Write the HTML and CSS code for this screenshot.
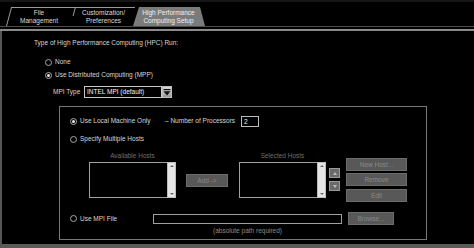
FILE: index.html
```html
<!DOCTYPE html>
<html lang="en">
<head>
  <meta charset="UTF-8" />
  <title>HPC Setup</title>
  <link rel="stylesheet" href="styles.css">
</head>
<body>
  <div class="top-strip"></div>

  <div class="tabs">
    <div class="tab tab-first">File<br>Management</div>
    <div class="tab tab-second">Customization/<br>Preferences</div>
    <div class="tab tab-active">High Performance<br>Computing Setup</div>
  </div>
  <div class="rule"></div>

  <div class="panel">
    <div class="heading">Type of High Performance Computing (HPC) Run:</div>

    <label class="radio-row run-none"><span class="radio"></span>None</label>
    <label class="radio-row run-mpp"><span class="radio on"></span>Use Distributed Computing (MPP)</label>

    <div class="mpi-type">
      <span class="mpi-label">MPI Type</span>
      <div class="select">
        <span class="select-value">INTEL MPI (default)</span>
        <span class="select-btn">
          <svg width="8" height="7" viewBox="0 0 8 7"><rect x="0.5" y="0" width="7" height="1.2" fill="#111"/><path d="M0.5 2.2 H7.5 L4 6.5 Z" fill="#111"/></svg>
        </span>
      </div>
    </div>

    <div class="hosts-box">
      <div class="box-row row-local">
        <label class="radio-row local-label"><span class="radio on"></span>Use Local Machine Only</label>
        <span class="procs">– Number of Processors</span>
        <span class="num-input">2</span>
      </div>

      <div class="box-row row-multi">
        <label class="radio-row"><span class="radio"></span>Specify Multiple Hosts</label>
      </div>

      <div class="hosts">
        <div class="host-col col-available">
          <div class="col-label">Available Hosts</div>
          <div class="listbox">
            <div class="list-area"></div>
            <div class="scroll"><span class="arrow up"></span><span class="arrow down"></span></div>
          </div>
        </div>

        <button class="btn btn-add">Add -&gt;</button>

        <div class="host-col col-selected">
          <div class="col-label">Selected Hosts</div>
          <div class="listbox">
            <div class="list-area"></div>
            <div class="scroll"><span class="arrow up"></span><span class="arrow down"></span></div>
          </div>
        </div>

        <div class="updown">
          <span class="mini"><i class="tri up"></i></span>
          <span class="mini"><i class="tri down"></i></span>
        </div>

        <div class="host-btns">
          <button class="btn">New Host...</button>
          <button class="btn">Remove</button>
          <button class="btn">Edit</button>
        </div>
      </div>

      <div class="box-row row-file">
        <label class="radio-row file-label"><span class="radio"></span>Use MPI File</label>
        <div class="file-col">
          <div class="file-line">
            <div class="file-input"></div>
            <button class="btn btn-browse">Browse...</button>
          </div>
          <div class="hint">(absolute path required)</div>
        </div>
      </div>
    </div>
  </div>
</body>
</html>
```

FILE: styles.css
```css
* {
  box-sizing: border-box;
}

body {
  margin: 0;
  width: 474px;
  height: 248px;
  overflow: hidden;
  background: #000;
  color: #d6d6d6;
  font-family: "Liberation Sans", Arial, sans-serif;
  font-size: 6.5px;
  line-height: 10px;
}

.top-strip {
  height: 2px;
  background: #161616;
}

/* tabs */
.tabs {
  display: flex;
  height: 24px;
  padding-left: 6px;
  padding-top: 5px;
}

.tab {
  position: relative;
  height: 19px;
  text-align: center;
  line-height: 8px;
  padding-top: 2px;
  color: #dcdcdc;
}

.tab-first { width: 66px; }
.tab-second { width: 63px; }
.tab-active { width: 67px; color: #f0f0f0; }

.tab-first::before,
.tab-second::before {
  content: "";
  position: absolute;
  left: 0; top: 0; right: 0; bottom: 0;
  border-left: 1px solid #9a9a9a;
  border-top: 1px solid #9a9a9a;
  transform: skewX(-15deg);
  transform-origin: bottom left;
}

.tab-second::before {
  bottom: 10px;
  transform-origin: top left;
  left: 3px;
}

.tab-active::before {
  content: "";
  position: absolute;
  left: -2px; top: 0; right: -3px; bottom: 0;
  background: #7b7b7b;
  clip-path: polygon(6px 0, calc(100% - 5px) 0, 100% 100%, 0 100%);
  z-index: -1;
}

.tab-active {
  z-index: 0;
}

.rule {
  height: 5px;
  border-top: 1px solid #4c4c4c;
  border-bottom: 2px solid #8a8a8a;
}

/* main panel */
.panel {
  height: 217px;
  border-left: 2px solid #555;
  border-bottom: 4px solid #595959;
  padding: 7px 0 0 32px;
}

.heading {
  height: 10px;
}

.radio-row {
  display: flex;
  align-items: center;
  gap: 3px;
  height: 10px;
  white-space: nowrap;
}

.radio {
  width: 7px;
  height: 7px;
  border: 1px solid #a8a8a8;
  border-radius: 50%;
  display: flex;
  align-items: center;
  justify-content: center;
  flex: none;
}

.radio.on::after {
  content: "";
  width: 3px;
  height: 3px;
  border-radius: 50%;
  background: #e8e8e8;
}

.run-none {
  margin: 9px 0 0 11px;
}

.run-mpp {
  margin: 3px 0 0 11px;
}

.mpi-type {
  display: flex;
  align-items: center;
  margin: 6px 0 0 19px;
  height: 12px;
}

.mpi-label {
  width: 31px;
}

.select {
  display: flex;
  height: 12px;
}

.select-value {
  width: 78px;
  border: 1px solid #c8c8c8;
  padding-left: 2px;
  line-height: 10px;
  color: #f2f2f2;
}

.select-btn {
  width: 10px;
  background: linear-gradient(#d8d8d8, #9a9a9a);
  border: 1px solid #bdbdbd;
  display: flex;
  align-items: center;
  justify-content: center;
}

/* inner box */
.hosts-box {
  margin: 8px 0 0 25px;
  width: 368px;
  height: 134px;
  border: 1px solid #777;
  padding: 8px 0 0 10px;
}

.box-row {
  display: flex;
  align-items: center;
  height: 12px;
}

.local-label {
  width: 95px;
}

.procs {
  width: 76px;
}

.num-input {
  width: 18px;
  height: 11px;
  border: 1px solid #bdbdbd;
  line-height: 9px;
  padding-left: 2px;
  color: #f2f2f2;
}

.row-multi {
  margin-top: 6px;
}

.hosts {
  display: flex;
  align-items: flex-start;
  height: 50px;
  margin: 7px 0 0 19px;
}

.host-col {
  width: 87px;
}

.col-label {
  height: 10px;
  line-height: 8px;
  text-align: center;
  color: #6e6e6e;
}

.listbox {
  display: flex;
  height: 36px;
}

.list-area {
  flex: 1;
  border: 1px solid #a0a0a0;
  border-right: none;
}

.scroll {
  width: 9px;
  background: #e6e6e6;
  border: 1px solid #bcbcbc;
  display: flex;
  flex-direction: column;
  justify-content: space-between;
  align-items: center;
  padding: 2px 0;
}

.arrow {
  width: 0;
  height: 0;
  border-left: 2px solid transparent;
  border-right: 2px solid transparent;
}

.arrow.up { border-bottom: 2px solid #666; }
.arrow.down { border-top: 2px solid #666; }

.btn {
  font-family: inherit;
  font-size: 6.5px;
  line-height: 11px;
  height: 13px;
  padding: 0;
  margin: 0;
  background: #585858;
  border: 1px solid #6c6c6c;
  color: #8a8a8a;
  text-align: center;
}

.btn-add {
  width: 42px;
  margin: 22px 11px 0 10px;
}

.updown {
  display: flex;
  flex-direction: column;
  gap: 3px;
  margin: 16px 0 0 3px;
}

.mini {
  width: 11px;
  height: 10px;
  background: #6a6a6a;
  border: 1px solid #9a9a9a;
  display: flex;
  align-items: center;
  justify-content: center;
}

.tri {
  width: 0;
  height: 0;
  border-left: 2px solid transparent;
  border-right: 2px solid transparent;
}

.tri.up { border-bottom: 3px solid #bbb; }
.tri.down { border-top: 3px solid #bbb; }

.host-btns {
  display: flex;
  flex-direction: column;
  gap: 2px;
  margin: 6px 0 0 6px;
}

.host-btns .btn {
  width: 61px;
}

.host-btns .btn:last-child {
  margin-top: 1px;
}

.row-file {
  align-items: flex-start;
  height: auto;
  margin-top: 10px;
}

.file-label {
  width: 83px;
  height: 13px;
}

.file-line {
  display: flex;
  align-items: center;
  height: 13px;
}

.file-input {
  width: 189px;
  height: 10px;
  border: 1px solid #a0a0a0;
}

.btn-browse {
  width: 46px;
  margin-left: 6px;
}

.hint {
  width: 189px;
  text-align: center;
  color: #8c8c8c;
  line-height: 10px;
  margin-top: 1px;
}
```
